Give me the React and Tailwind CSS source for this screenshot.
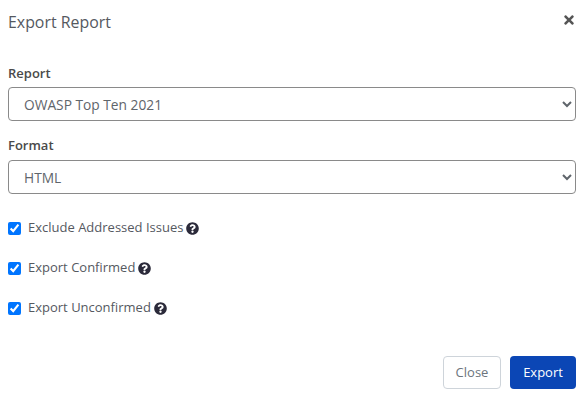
import React from "react";
import { FaQuestionCircle, FaTimes } from "react-icons/fa";

const CheckRow = ({ label }) => (
  <label className="flex items-center h-5 text-[13px] text-[#55595f]">
    <input type="checkbox" defaultChecked className="w-[13px] h-[13px] m-0 mr-[7px] appearance-auto" />
    <span>{label}</span>
    <FaQuestionCircle className="ml-[3px] text-[#2b2a3a]" size={13} />
  </label>
);

const SelectField = ({ label, value, labelGap }) => (
  <div>
    <label className={`block text-[13px] font-semibold leading-5 text-[#4a4a4a] ${labelGap}`}>{label}</label>
    <select
      defaultValue={value}
      className="block w-full h-[34px] pl-[11px] pr-0 text-[13.75px] text-[#5f656b] bg-white border border-[#8a8a8a] rounded-[4px] appearance-auto"
    >
      <option>{value}</option>
    </select>
  </div>
);

export default function App() {
  return (
    <div className="w-[588px] h-[406px] bg-white flex flex-col pl-2 pr-3 font-['Open_Sans','Noto_Sans',sans-serif]">
      {/* Header */}
      <div className="flex items-center justify-between h-[44px]">
        <h5 className="mt-[2px] text-[15.9px] text-[#55595f]">Export Report</h5>
        <FaTimes className="mb-[5px] text-[#555555]" size={14} />
      </div>

      {/* Fields */}
      <div className="flex flex-col gap-[14px] mt-[19px]">
        <SelectField label="Report" value="OWASP Top Ten 2021" labelGap="mb-1" />
        <SelectField label="Format" value="HTML" labelGap="mb-[5px]" />
      </div>

      {/* Options */}
      <div className="flex flex-col gap-5 mt-[24px]">
        <CheckRow label="Exclude Addressed Issues" />
        <CheckRow label="Export Confirmed" />
        <CheckRow label="Export Unconfirmed" />
      </div>

      {/* Footer */}
      <div className="flex justify-end gap-[9px] mt-[38px]">
        <button className="w-[58px] h-[33px] text-[13px] text-[#6c757d] bg-white border border-[#ced4da] rounded-[4px]">Close</button>
        <button className="w-[66px] h-[33px] text-[13px] text-white bg-[#0b46b5] rounded-[4px]">Export</button>
      </div>
    </div>
  );
}
